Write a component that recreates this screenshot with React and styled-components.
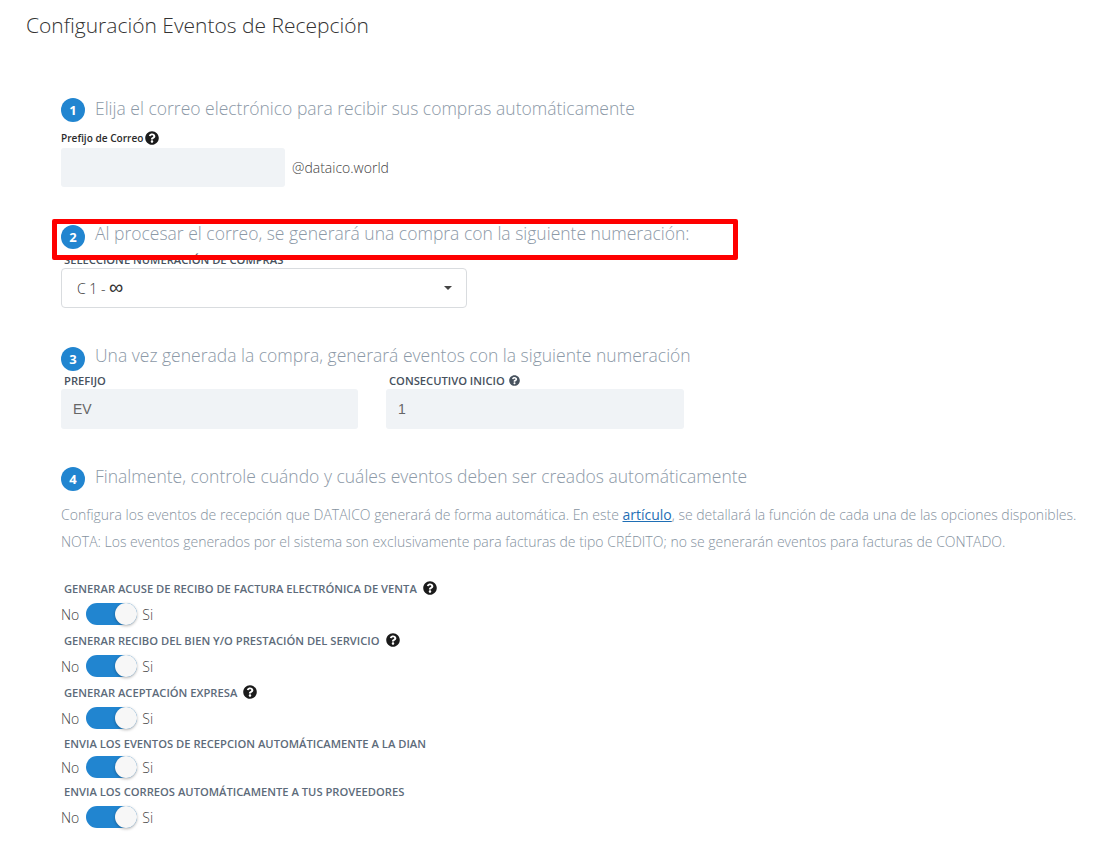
import styled, { createGlobalStyle } from "styled-components";
import { FaQuestionCircle } from "react-icons/fa";

const GlobalStyle = createGlobalStyle`
  html, body {
    margin: 0;
    padding: 0;
    background: #fff;
    font-family: "Open Sans", sans-serif;
    color: #46505a;
  }
`;

const Page = styled.div`
  width: 1098px;
  height: 846px;
  overflow: hidden;
  box-sizing: border-box;
  padding: 11px 0 0 26px;
`;

const Title = styled.h1`
  margin: 0;
  font-size: 21px;
  line-height: 28px;
  font-weight: 300;
  color: #333;
`;

const Body = styled.div`
  margin: 59px 0 0 35px;
`;

const Section = styled.section`
  position: relative;
  margin-bottom: ${(props) => props.$gap || 0}px;
`;

const StepHeading = styled.div`
  display: flex;
  align-items: center;
  height: 24px;
  gap: 10px;
  font-size: 17.5px;
  font-weight: 300;
  color: #8c99a7;
  white-space: nowrap;
`;

const StepText = styled.span`
  margin-top: -${(props) => props.$lift || 6}px;
`;

const Badge = styled.span`
  display: flex;
  align-items: center;
  justify-content: center;
  width: 24px;
  height: 24px;
  border-radius: 50%;
  background: #2185d0;
  color: #fff;
  font-size: 13px;
  font-weight: 700;
`;

const HighlightBox = styled.div`
  position: absolute;
  left: -9px;
  top: -6px;
  width: 686px;
  height: 41px;
  box-sizing: border-box;
  border: 5px solid #fe0000;
  border-radius: 2px;
`;

const FieldLabel = styled.label`
  display: flex;
  align-items: center;
  gap: ${(props) => props.$iconGap || 2}px;
  height: ${(props) => props.$height || 16}px;
  margin-top: ${(props) => props.$top || 0}px;
  font-size: ${(props) => (props.$caps ? 11.2 : 10.1)}px;
  font-weight: 600;
  color: ${(props) => (props.$muted ? "#5d6b7a" : props.$caps ? "#47525e" : "#2b2b2b")};
  padding-left: ${(props) => (props.$caps ? 3 : 0)}px;
  white-space: nowrap;
`;

const Help = styled(FaQuestionCircle)`
  font-size: ${(props) => props.$size || 14}px;
  color: ${(props) => props.$color || "#1b1b1b"};
  flex: none;
`;

const InputRow = styled.div`
  display: flex;
  align-items: center;
  gap: 7px;
  margin-top: 2px;
`;

const Input = styled.div`
  display: flex;
  align-items: center;
  box-sizing: border-box;
  width: ${(props) => props.$width}px;
  height: ${(props) => props.$height || 40}px;
  padding-left: 12px;
  background: #f0f3f6;
  border-radius: 3px;
  font-family: "Liberation Sans", Arial, sans-serif;
  font-size: 14px;
  color: #666;
`;

const Suffix = styled.span`
  font-size: 14px;
  font-weight: 300;
  color: #444;
`;

const SelectLabel = styled.div`
  height: 19px;
  padding: 3px 0 0 3px;
  box-sizing: border-box;
  font-size: 11.2px;
  line-height: 16px;
  font-weight: 600;
  color: #47525e;
  white-space: nowrap;
`;

const Select = styled.div`
  display: flex;
  align-items: center;
  justify-content: space-between;
  box-sizing: border-box;
  width: 406px;
  height: 40px;
  padding: 0 14px 0 15px;
  border: 1px solid #d9dcdf;
  border-radius: 4px;
  font-size: 14px;
  font-weight: 300;
  color: #333;
`;

const InfinityMark = styled.span`
  font-family: "Liberation Sans", Arial, sans-serif;
  font-size: 20px;
  font-weight: 400;
  line-height: 14px;
`;

const Caret = styled.span`
  width: 0;
  height: 0;
  border-left: 4px solid transparent;
  border-right: 4px solid transparent;
  border-top: 4px solid #444;
`;

const Columns = styled.div`
  display: flex;
  gap: 28px;
`;

const Column = styled.div`
  display: flex;
  flex-direction: column;
`;

const Paragraph = styled.p`
  margin: ${(props) => props.$top || 0}px 0 0;
  font-size: 14px;
  line-height: 27px;
  font-weight: 300;
  color: #8592a0;
  white-space: nowrap;
`;

const ArticleLink = styled.a`
  color: #1f6fb5;
  font-weight: 500;
  text-decoration: underline;
`;

const Toggles = styled.div`
  margin-top: 25px;
`;

const ToggleBlock = styled.div`
  margin-bottom: ${(props) => props.$gap}px;
`;

const ToggleRow = styled.div`
  display: flex;
  align-items: center;
  height: 24px;
  margin-top: ${(props) => props.$top}px;
  font-size: 14px;
  font-weight: 300;
  color: #444;
`;

const Switch = styled.span`
  position: relative;
  display: block;
  width: 51px;
  height: 22px;
  margin: 0 5px 0 7px;
  border-radius: 11px;
  background: #2185d0;
`;

const Knob = styled.span`
  position: absolute;
  right: 0;
  top: 0;
  width: 22px;
  height: 22px;
  border-radius: 50%;
  background: #f7f7f7;
  box-shadow: 0 1px 3px rgba(0, 0, 0, 0.3);
`;

const events = [
  { label: "GENERAR ACUSE DE RECIBO DE FACTURA ELECTRÓNICA DE VENTA", help: true, rowTop: 6, gap: 6 },
  { label: "GENERAR RECIBO DEL BIEN Y/O PRESTACIÓN DEL SERVICIO", help: true, rowTop: 6, gap: 6 },
  { label: "GENERAR ACEPTACIÓN EXPRESA", help: true, rowTop: 6, gap: 5 },
  { label: "ENVIA LOS EVENTOS DE RECEPCION AUTOMÁTICAMENTE A LA DIAN", rowTop: 4, gap: 4 },
  { label: "ENVIA LOS CORREOS AUTOMÁTICAMENTE A TUS PROVEEDORES", rowTop: 6, gap: 0 },
];

const App = () => (
  <Page>
    <GlobalStyle />
    <Title>Configuración Eventos de Recepción</Title>
    <Body>
      <Section $gap={38}>
        <StepHeading>
          <Badge>1</Badge>
          <StepText $lift={4}>Elija el correo electrónico para recibir sus compras automáticamente</StepText>
        </StepHeading>
        <FieldLabel $top={8}>
          Prefijo de Correo <Help />
        </FieldLabel>
        <InputRow>
          <Input $width={224} $height={39} />
          <Suffix>@dataico.world</Suffix>
        </InputRow>
      </Section>

      <Section $gap={39}>
        <StepHeading>
          <Badge>2</Badge>
          <StepText $lift={8}>Al procesar el correo, se generará una compra con la siguiente numeración:</StepText>
        </StepHeading>
        <SelectLabel>SELECCIONE NUMERACIÓN DE COMPRAS</SelectLabel>
        <HighlightBox />
        <Select>
          <span>
            C 1 - <InfinityMark>∞</InfinityMark>
          </span>
          <Caret />
        </Select>
      </Section>

      <Section $gap={38}>
        <StepHeading>
          <Badge>3</Badge>
          <StepText $lift={8}>Una vez generada la compra, generará eventos con la siguiente numeración</StepText>
        </StepHeading>
        <Columns>
          <Column>
            <FieldLabel $caps $height={18}>PREFIJO</FieldLabel>
            <Input $width={297}>EV</Input>
          </Column>
          <Column>
            <FieldLabel $caps $height={18} $iconGap={4}>
              CONSECUTIVO INICIO <Help $size={11} $color="#47525e" />
            </FieldLabel>
            <Input $width={298}>1</Input>
          </Column>
        </Columns>
      </Section>

      <Section>
        <StepHeading>
          <Badge>4</Badge>
          <StepText>Finalmente, controle cuándo y cuáles eventos deben ser creados automáticamente</StepText>
        </StepHeading>
        <Paragraph $top={10}>
          Configura los eventos de recepción que DATAICO generará de forma automática. En este{" "}
          <ArticleLink href="#articulo">artículo</ArticleLink>, se detallará la función de cada una de
          las opciones disponibles.
        </Paragraph>
        <Paragraph>
          NOTA: Los eventos generados por el sistema son exclusivamente para facturas de tipo CRÉDITO;
          no se generarán eventos para facturas de CONTADO.
        </Paragraph>
        <Toggles>
          {events.map((event) => (
            <ToggleBlock key={event.label} $gap={event.gap}>
              <FieldLabel $caps $muted $iconGap={6}>
                {event.label} {event.help && <Help />}
              </FieldLabel>
              <ToggleRow $top={event.rowTop}>
                No
                <Switch>
                  <Knob />
                </Switch>
                Si
              </ToggleRow>
            </ToggleBlock>
          ))}
        </Toggles>
      </Section>
    </Body>
  </Page>
);

export default App;
